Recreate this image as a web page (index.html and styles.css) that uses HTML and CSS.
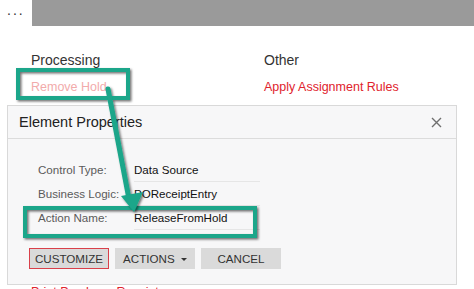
FILE: index.html
```html
<!DOCTYPE html>
<html lang="en">
<head>
    <meta charset="UTF-8">
    <title>Element Properties</title>
    <link rel="stylesheet" href="styles.css">
</head>
<body>
    <div class="topbar">
        <div class="more">...</div>
        <div class="toolbar"></div>
    </div>

    <div class="menu">
        <div class="menu-col processing">
            <div class="menu-heading">Processing</div>
            <a class="menu-link disabled">Remove Hold</a>
            <a class="menu-link print">Print Purchase Receipt</a>
        </div>
        <div class="menu-col">
            <div class="menu-heading">Other</div>
            <a class="menu-link">Apply Assignment Rules</a>
        </div>
    </div>

    <div class="dialog">
        <div class="dialog-header">
            <span class="dialog-title">Element Properties</span>
            <svg class="close" width="11" height="11" viewBox="0 0 11 11">
                <path d="M1 1 L10 10 M10 1 L1 10" stroke="#6f6f6f" stroke-width="1.4" fill="none"/>
            </svg>
        </div>
        <div class="dialog-body">
            <div class="props">
                <div class="prop-label">Control Type:</div>
                <div class="prop-value">Data Source</div>
                <div class="prop-label">Business Logic:</div>
                <div class="prop-value">POReceiptEntry</div>
                <div class="prop-label">Action Name:</div>
                <div class="prop-value">ReleaseFromHold</div>
            </div>
            <div class="buttons">
                <button class="btn btn-active">CUSTOMIZE</button>
                <button class="btn">ACTIONS <span class="caret"></span></button>
                <button class="btn">CANCEL</button>
            </div>
        </div>
    </div>

    <!-- screenshot annotations -->
    <svg class="marks" width="474" height="289" viewBox="0 0 474 289">
        <defs>
            <filter id="shade" x="-10%" y="-10%" width="130%" height="130%">
                <feDropShadow dx="1.5" dy="1.5" stdDeviation="1" flood-color="#000" flood-opacity="0.55"/>
            </filter>
        </defs>
        <g filter="url(#shade)" stroke="#1aa68a" fill="none" stroke-width="4">
            <rect x="18" y="70" width="110" height="28"/>
            <rect x="25" y="208" width="230" height="28"/>
            <path d="M108 89 L129 199" stroke-width="5" stroke-linecap="round"/>
        </g>
        <path d="M121 196 L143 192 L134 212 Z" fill="#1aa68a" filter="url(#shade)"/>
    </svg>
</body>
</html>
```

FILE: styles.css
```css
body {
    margin: 0;
    font-family: "Liberation Sans", Arial, sans-serif;
    background-color: #fff;
    color: #333;
    width: 474px;
    height: 289px;
    overflow: hidden;
    position: relative;
}

.topbar {
    display: flex;
    height: 26px;
}

.more {
    width: 32px;
    font-size: 14px;
    line-height: 20px;
    letter-spacing: 2px;
    padding-left: 7px;
    box-sizing: border-box;
    color: #333;
}

.toolbar {
    flex: 1;
    background-color: #9a9a9a;
}

.menu {
    display: flex;
    padding: 25px 0 0 31px;
}

.menu-col {
    display: flex;
    flex-direction: column;
    flex: none;
}

.menu-col.processing {
    width: 233px;
}

.menu-heading {
    font-size: 14px;
    line-height: 18px;
    color: #333;
}

.menu-link {
    font-size: 12.5px;
    line-height: 18px;
    margin-top: 9px;
    color: #e0222c;
}

.menu-link.disabled {
    color: #f2abab; /* greyed out action */
}

.menu-link.print {
    margin-top: 187px;
}

.dialog {
    position: absolute;
    left: 7px;
    top: 105px;
    width: 450px;
    height: 180px;
    box-sizing: border-box;
    border: 1px solid #d9d9d9;
    background-color: #f7f7f8;
}

.dialog-header {
    display: flex;
    justify-content: space-between;
    align-items: center;
    height: 32px;
    padding: 0 14px 0 11px;
    border-bottom: 1px solid #dcdcdc;
}

.dialog-title {
    font-size: 14.5px;
    color: #222;
}

.dialog-body {
    padding: 19px 0 0 21px;
}

.props {
    display: grid;
    grid-template-columns: 96px 126px;
    grid-auto-rows: 24px;
    margin-left: 9px;
    font-size: 11.6px;
}

.prop-label {
    color: #5a5a5a;
    line-height: 24px;
}

.prop-value {
    color: #111;
    line-height: 23px;
    border-bottom: 1px solid #e6e6e6;
}

.buttons {
    display: flex;
    gap: 6px;
    margin-top: 18px;
}

.btn {
    width: 80px;
    height: 21px;
    padding: 0;
    border: 1px solid #dadada;
    background-color: #dadada;
    color: #333;
    font-family: "Liberation Sans", Arial, sans-serif;
    font-size: 11.6px;
}

.btn-active {
    border-color: #d9404a;
}

.caret {
    display: inline-block;
    width: 0;
    height: 0;
    margin-left: 3px;
    vertical-align: 2px;
    border-left: 3px solid transparent;
    border-right: 3px solid transparent;
    border-top: 3px solid #333;
}

.marks {
    position: absolute;
    left: 0;
    top: 0;
    pointer-events: none;
}
```
